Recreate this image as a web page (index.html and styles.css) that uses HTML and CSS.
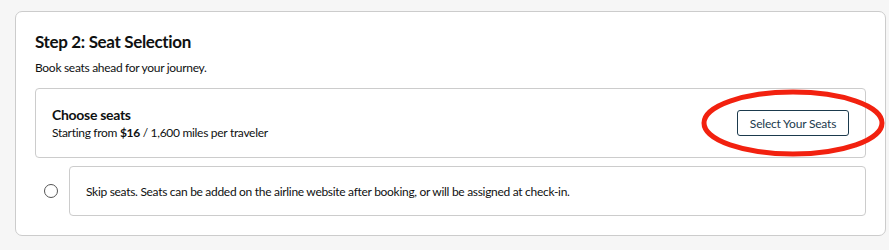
FILE: index.html
```html
<!DOCTYPE html>
<html>
<head>
    <title>Seat Selection</title>
    <link rel="stylesheet" href="styles.css">
</head>
<body>
    <div class="step-card">
        <h2>Step 2: Seat Selection</h2>
        <p class="intro">Book seats ahead for your journey.</p>

        <div class="seat-option">
            <div class="seat-info">
                <h3>Choose seats</h3>
                <p>Starting from <b>$16</b> / 1,600 miles per traveler</p>
            </div>
            <span class="btn-wrap">
                <button class="select-btn">Select Your Seats</button>
                <svg class="circle-mark" width="186" height="68" viewBox="0 0 186 68">
                    <ellipse cx="93" cy="34" rx="89" ry="31" fill="none" stroke="#f2210f" stroke-width="5"/>
                </svg>
            </span>
        </div>

        <div class="skip-row">
            <div class="radio-col"><span class="radio"></span></div>
            <div class="skip-box">Skip seats. Seats can be added on the airline website after booking, or will be assigned at check-in.</div>
        </div>
    </div>
</body>
</html>
```

FILE: styles.css
```css
body { margin: 0; padding: 11px 3px 15px 15px; background: #f6f6f6; font-family: Lato, Arial, sans-serif; color: #0f1111; letter-spacing: -0.3px; }
.step-card { background: #fff; border: 1px solid #cccccc; border-radius: 7px; padding: 19px 19px 19px 19px; }
h2 { margin: 0; font-size: 17px; font-weight: bold; line-height: 22px; letter-spacing: -0.35px; }
.intro { margin: 7px 0 12px; font-size: 12px; line-height: 16px; }
.seat-option { display: flex; align-items: center; justify-content: space-between; height: 68px; padding: 0 16px; border: 1px solid #cccccc; border-radius: 4px; }
.seat-info h3 { margin: 0; font-size: 14px; font-weight: bold; line-height: 18px; }
.seat-info p { margin: 1px 0 0; font-size: 12px; line-height: 16px; }
.btn-wrap { position: relative; display: inline-block; }
.select-btn { font-family: Lato, Arial, sans-serif; font-size: 12px; letter-spacing: -0.2px; color: #1b3a4d; background: #fff; border: 1px solid #1b3a4d; border-radius: 3px; height: 26px; width: 112px; padding: 0; }
.circle-mark { position: absolute; left: -37px; top: -21px; pointer-events: none; }
.skip-row { display: flex; margin-top: 8px; }
.radio-col { width: 34px; display: flex; align-items: center; padding-left: 9px; box-sizing: border-box; }
.radio { width: 12px; height: 12px; border: 1.5px solid #555; border-radius: 50%; }
.skip-box { flex: 1; height: 48px; display: flex; align-items: center; padding: 0 16px; border: 1px solid #cccccc; border-radius: 4px; font-size: 12px; }
```
